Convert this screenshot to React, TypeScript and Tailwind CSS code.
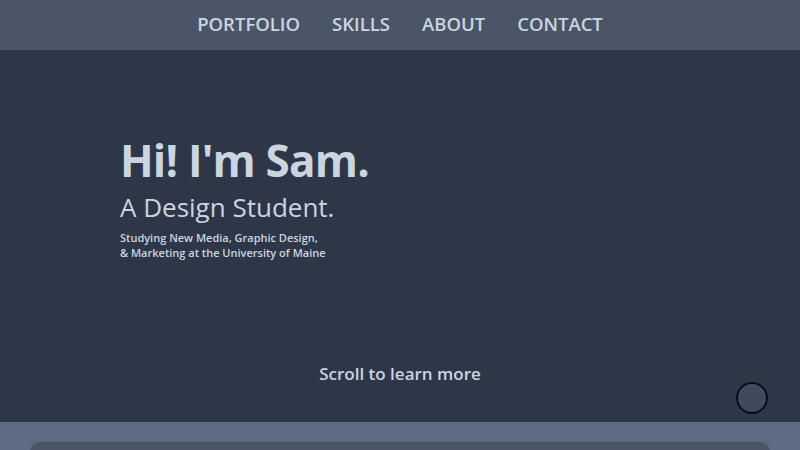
import React from 'react';

const font = { fontFamily: '"Open Sans", "Noto Sans", sans-serif' };

export default function App() {
  return (
    <div className="w-[800px] h-[450px] overflow-hidden bg-[#2d3748] text-[#cbd5e0]" style={font}>
      {/* Nav */}
      <nav className="h-[50px] bg-[#4a5568] flex items-center justify-center gap-[32px] text-[18.5px] font-semibold pb-[3px]">
        <a>PORTFOLIO</a>
        <a>SKILLS</a>
        <a>ABOUT</a>
        <a>CONTACT</a>
      </nav>

      {/* Hero */}
      <section className="relative h-[372px] flex flex-col">
        <div className="pl-[120px] pt-[80px]">
          <h1 className="text-[44px] font-bold leading-[60px] tracking-[-0.8px]">Hi! I'm Sam.</h1>
          <h2 className="text-[26px] leading-[36px] mt-[-1px]">A Design Student.</h2>
          <p className="text-[11px] font-semibold leading-[15px] mt-[5px]">
            Studying New Media, Graphic Design,
            <br />
            &amp; Marketing at the University of Maine
          </p>
        </div>
        <div className="mt-auto mb-[36px] text-center text-[17px] font-semibold">Scroll to learn more</div>
        <div className="absolute right-[32px] bottom-[8px] w-[32px] h-[32px] rounded-full border-2 border-[#0b0d12] bg-[#404a5c]" />
      </section>

      {/* Next section */}
      <section className="h-[28px] bg-[#5f6b85] px-[30px] pt-[20px]">
        <div className="h-[40px] rounded-t-[10px] bg-[#4a5568]" />
      </section>
    </div>
  );
}
